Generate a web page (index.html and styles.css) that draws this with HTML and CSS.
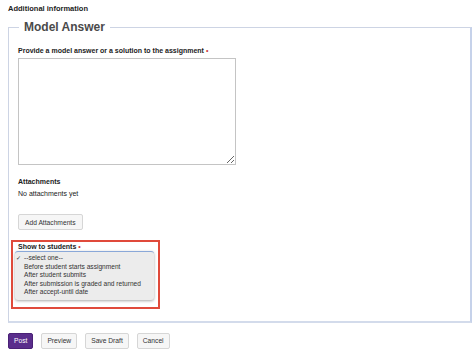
FILE: index.html
```html
<!DOCTYPE html>
<html>
<head>
<meta charset="utf-8">
<title>Model Answer</title>
<link rel="stylesheet" href="styles.css">
</head>
<body>

<h4 class="section">Additional information</h4>

<fieldset class="box">
  <legend>Model Answer</legend>

  <label class="lbl" for="answer">Provide a model answer or a solution to the assignment <span class="req">&bull;</span></label>
  <textarea id="answer" class="answer"></textarea>

  <div class="lbl attach">Attachments</div>
  <div class="note">No attachments yet</div>
  <button class="btn add">Add Attachments</button>

  <div class="highlight">
    <div class="lbl">Show to students <span class="req">&bull;</span></div>
    <div class="menu">
      <div class="opt sel"><span class="chk">&#10003;</span>--select one--</div>
      <div class="opt">Before student starts assignment</div>
      <div class="opt">After student submits</div>
      <div class="opt">After submission is graded and returned</div>
      <div class="opt">After accept-until date</div>
    </div>
  </div>
</fieldset>

<div class="actions">
  <button class="btn post">Post</button>
  <button class="btn">Preview</button>
  <button class="btn">Save Draft</button>
  <button class="btn">Cancel</button>
</div>

</body>
</html>
```

FILE: styles.css
```css
body {
  margin: 0;
  padding: 0 0 0 8px;
  width: 466px;
  font-family: "Liberation Sans", Arial, sans-serif;
  font-size: 7px;
  color: #222;
  background: #fff;
}

.section {
  margin: 0;
  padding-top: 4px;
  height: 17px;
  font-size: 7.5px;
  line-height: 9px;
  font-weight: bold;
}

.box {
  margin: 0;
  padding: 13px 9px 12px 9px;
  width: 443px;
  border: 1px solid #cdd4e4;
  border-right: 2px solid #c6d2ea;
  border-bottom: 2px solid #d3dbeb;
}

.box legend {
  margin-left: 1px;
  padding: 0 5px;
  font-size: 12px;
  line-height: 12px;
  font-weight: bold;
  color: #4a4a4a;
}

.lbl {
  display: block;
  font-weight: bold;
  line-height: 9px;
}

.req { color: #c33; font-weight: normal; }

.answer {
  display: block;
  margin: 3px 0 0 0;
  width: 218px;
  height: 107px;
  box-sizing: border-box;
  border: 1px solid #c4c4c4;
  resize: both;
}

.attach { margin-top: 12px; }

.note {
  margin-top: 3px;
  line-height: 9px;
}

.btn {
  height: 16px;
  padding: 0 5px;
  font-family: "Liberation Sans", Arial, sans-serif;
  font-size: 6.7px;
  white-space: nowrap;
  color: #333;
  background: #f6f6f6;
  border: 1px solid #d6d6d6;
  border-radius: 2px;
}

.add {
  display: block;
  margin-top: 16px;
  padding: 0 6px;
}

.highlight {
  margin: 10px 0 0 -7px;
  padding: 0 0 7px 5px;
  width: 140px;
  border: 2px solid #e04a3b;
}

.menu {
  margin: 0 0 0 -3px;
  padding: 2px 0 3px 0;
  width: 139px;
  background: #ececec;
  border-top: 1px solid #8aa8d8;
  border-radius: 3px;
  box-shadow: 0 1px 3px rgba(0, 0, 0, 0.35);
}

.opt {
  position: relative;
  padding-left: 9px;
  font-size: 6.6px;
  line-height: 8.6px;
  color: #333;
}

.chk {
  position: absolute;
  left: 1px;
  top: 0;
  font-size: 6px;
}

.actions {
  display: flex;
  gap: 8px;
  margin-top: 10px;
}

.post {
  color: #fff;
  background: #5a2d8c;
  border-color: #4a2176;
}
```
